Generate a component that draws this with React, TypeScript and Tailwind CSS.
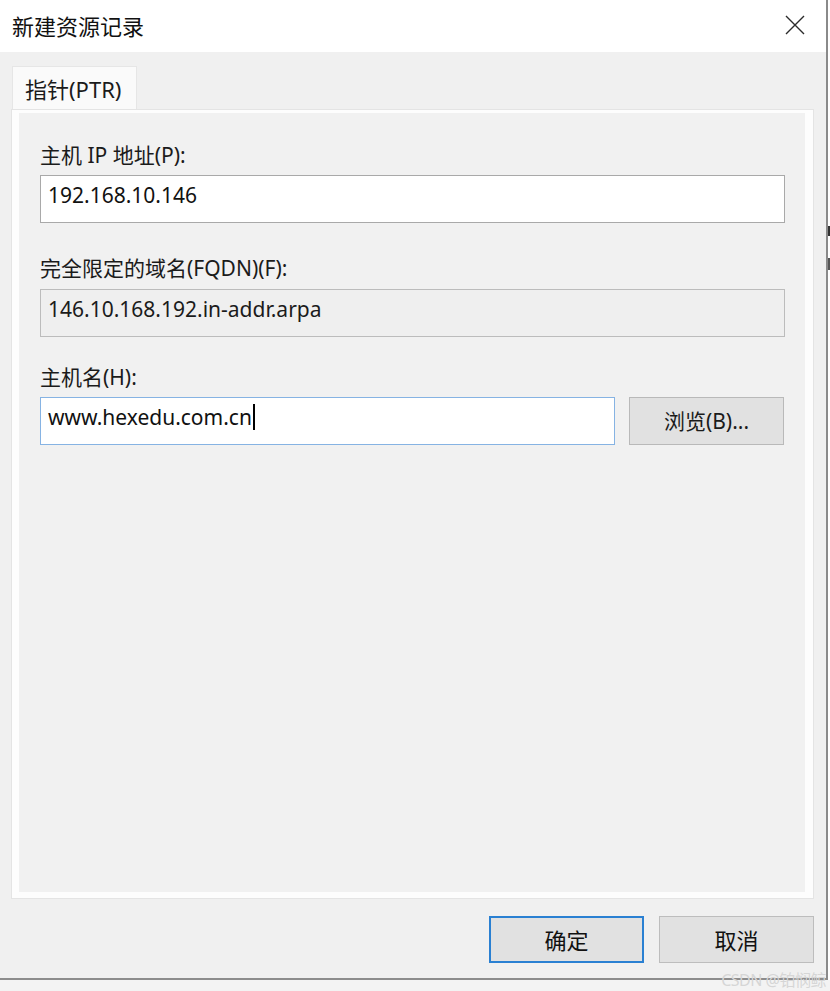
import React from "react";

const FONT = {
  fontFamily: '"Noto Sans", "Noto Sans CJK SC", sans-serif',
};

function Field({ label, children, top }: { label: string; children: React.ReactNode; top: string }) {
  return (
    <div className={top}>
      <div className="h-[28px] text-[21px] leading-[28px] text-[#1b1b1b]">{label}</div>
      {children}
    </div>
  );
}

export default function App() {
  return (
    <div className="relative h-[991px] w-[830px] overflow-hidden bg-[#f3f3f3]" style={FONT}>
      <div className="flex h-[980px]">
        <div className="flex w-[826px] flex-col border-b-2 border-[#8c8c8c] bg-[#f0f0f0]">
          {/* title bar */}
          <div className="flex h-[52px] shrink-0 items-center justify-between bg-white pl-[12px] pr-[21px]">
            <span className="text-[22px] leading-[28px] text-[#111]">新建资源记录</span>
            <svg width="20" height="20" viewBox="0 0 20 20" className="mt-[-3px]">
              <path d="M1 1 L19 19 M19 1 L1 19" stroke="#2b2b2b" strokeWidth="1.4" fill="none" />
            </svg>
          </div>

          {/* tabs */}
          <div className="flex-1 pl-[12px] pt-[15px]">
            <div className="ml-[1px] flex h-[43px] w-[123px] items-center bg-[#fafafa] pl-[12px] shadow-[0_0_0_1px_#e6e6e6]">
              <span className="text-[22px] leading-[28px] text-[#1b1b1b]">指针(PTR)</span>
            </div>
            <div className="h-[788px] w-[801px] border-b-[6px] border-l-[7px] border-r-[8px] border-t-[3px] border-[#fdfdfd] bg-[#f1f1f1] pl-[21px] shadow-[0_0_0_1px_#e4e4e4]">
              <Field label="主机 IP 地址(P):" top="pt-[28px]">
                <div className="mt-[6px] h-[48px] w-[745px] border border-[#a9a9a9] bg-white pl-[7px] pt-[5px] text-[21px] leading-[28px] text-[#111]">
                  192.168.10.146
                </div>
              </Field>
              <Field label="完全限定的域名(FQDN)(F):" top="mt-[31px]">
                <div className="mt-[7px] h-[48px] w-[745px] border border-[#bcbcbc] bg-[#efefef] pl-[7px] pt-[5px] text-[21px] leading-[28px] text-[#1b1b1b]">
                  146.10.168.192.in-addr.arpa
                </div>
              </Field>
              <Field label="主机名(H):" top="mt-[26px]">
                <div className="mt-[6px] flex gap-[14px]">
                  <div className="flex h-[48px] w-[575px] items-start border border-[#86b3e3] bg-white pl-[7px] pt-[5px] text-[21px] leading-[28px] text-[#111]">
                    <span>www.hexedu.com.cn</span>
                    <span className="ml-[1px] mt-[1px] h-[26px] w-[2px] bg-black" />
                  </div>
                  <button className="flex h-[48px] w-[155px] items-center justify-center border border-[#b9b9b9] bg-[#e1e1e1] text-[21px] leading-[28px] text-[#1b1b1b]">
                    浏览(B)...
                  </button>
                </div>
              </Field>
            </div>

            {/* footer buttons */}
            <div className="mt-[18px] flex w-[802px] justify-end gap-[15px]">
              <button className="flex h-[47px] w-[155px] items-center justify-center border-2 border-[#2a80d2] bg-[#e1e1e1] text-[22px] leading-[28px] text-[#111]">
                确定
              </button>
              <button className="flex h-[47px] w-[155px] items-center justify-center border border-[#bdbdbd] bg-[#e1e1e1] text-[22px] leading-[28px] text-[#111]">
                取消
              </button>
            </div>
          </div>
        </div>
        <div className="w-[2px] bg-[#8a8a8a]" />
        <div className="relative w-[2px] bg-white">
          <span className="absolute left-0 top-[226px] h-[10px] w-[2px] bg-[#333]" />
          <span className="absolute left-0 top-[258px] h-[12px] w-[2px] bg-[#555]" />
        </div>
      </div>

      <span className="absolute bottom-[1px] right-[4px] text-[16px] leading-[20px] tracking-[-0.5px] text-[#d6d6d6]">
        CSDN @铂悯鲸
      </span>
    </div>
  );
}
